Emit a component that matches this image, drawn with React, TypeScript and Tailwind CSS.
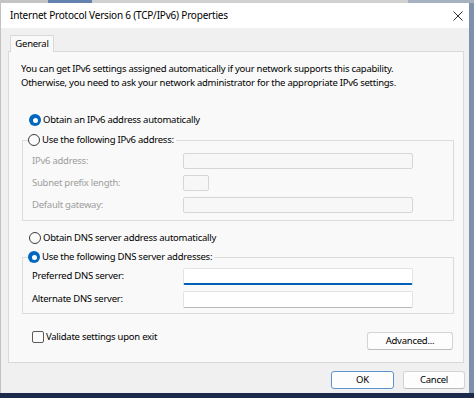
import React from "react";

const FONT = "font-['Noto_Sans','Liberation_Sans',sans-serif]";

function Radio({ label, checked = false }: { label: string; checked?: boolean }) {
  return (
    <div className="flex items-center gap-[2px] h-[16px]">
      {checked ? (
        <span className="w-[12px] h-[12px] rounded-full bg-[#0067c0] flex items-center justify-center">
          <span className="w-[5px] h-[5px] rounded-full bg-white" />
        </span>
      ) : (
        <span className="w-[12px] h-[12px] rounded-full border border-[#3c3c3c] bg-[#fbfbfb]" />
      )}
      <span className="text-black">{label}</span>
    </div>
  );
}

function DisabledRow({ label, small = false }: { label: string; small?: boolean }) {
  return (
    <div className="flex items-center h-[16px]">
      <span className="w-[160px] pl-[9px] text-[#9d9d9d]">{label}</span>
      <div
        className={
          (small ? "w-[26px]" : "w-[230px]") +
          " h-[16px] rounded-[2px] border border-[#d6d6d6] bg-[#f7f7f7]"
        }
      />
    </div>
  );
}

function DnsRow({ label, focused = false }: { label: string; focused?: boolean }) {
  return (
    <div className="flex items-center h-[17px]">
      <span className="w-[160px] pl-[9px] text-black">{label}</span>
      <div
        className={
          "w-[230px] h-[17px] rounded-[2px] bg-white border border-[#e3e3e3] " +
          (focused ? "border-b-2 border-b-[#005fb8]" : "border-b-[#b8b8b8]")
        }
      />
    </div>
  );
}

export default function App() {
  return (
    <div
      className={`w-[474px] h-[398px] overflow-hidden flex flex-col bg-[#1b2a4a] text-[9.5px] tracking-[-0.25px] ${FONT}`}
    >
      {/* strip of the window behind */}
      <div className="h-[3px] flex">
        <div className="w-[48px] bg-[#c4c4c4]" />
        <div className="w-[44px] bg-[#6583b0]" />
        <div className="flex-1 bg-[#d0d0d0]" />
        <div className="w-[66px] bg-[#a7b2c0]" />
      </div>

      <div className="h-[390px] flex">
        <div className="w-[469px] flex flex-col bg-[#f0f0f0] border-l border-[#c2c2c2]">
          {/* title bar */}
          <div className="h-[25px] bg-white flex items-center justify-between pl-[9px] pr-[5px]">
            <span className="text-[10px] tracking-[-0.2px] text-black">
              Internet Protocol Version 6 (TCP/IPv6) Properties
            </span>
            <svg width="10" height="10" viewBox="0 0 10 10" className="mr-[1px]">
              <path d="M0.5 0.5 L9.5 9.5 M9.5 0.5 L0.5 9.5" stroke="#2b2b2b" strokeWidth="1" />
            </svg>
          </div>

          <div className="px-[7px] pt-[7px]">
            <div className="ml-[2px] w-[44px] h-[17px] -mb-[1px] relative z-10 bg-[#f9f9f9] border border-b-0 border-[#d9d9d9] flex items-center justify-center text-black">
              General
            </div>

            <div className="w-[456px] h-[312px] border border-[#d9d9d9] bg-[#f9f9f9] flex flex-col">
              <p className="mt-[10px] ml-[12px] leading-[14px] text-black">
                You can get IPv6 settings assigned automatically if your network supports this capability.
                <br />
                Otherwise, you need to ask your network administrator for the appropriate IPv6 settings.
              </p>

              <div className="mt-[22px] ml-[20px]">
                <Radio label="Obtain an IPv6 address automatically" checked />
              </div>

              <fieldset className="mt-[4px] ml-[13px] w-[432px] border border-[#dcdcdc] pb-[7px]">
                <legend className="ml-[5px] pr-[2px]">
                  <Radio label="Use the following IPv6 address:" />
                </legend>
                <div className="mt-[5px] flex flex-col gap-[6px]">
                  <DisabledRow label="IPv6 address:" />
                  <DisabledRow label="Subnet prefix length:" small />
                  <DisabledRow label="Default gateway:" />
                </div>
              </fieldset>

              <div className="mt-[9px] ml-[20px]">
                <Radio label="Obtain DNS server address automatically" />
              </div>

              <fieldset className="mt-[3px] ml-[13px] w-[432px] border border-[#dcdcdc] pb-[5px]">
                <legend className="ml-[5px] pr-[2px]">
                  <Radio label="Use the following DNS server addresses:" checked />
                </legend>
                <div className="mt-[3px] flex flex-col gap-[6px]">
                  <DnsRow label="Preferred DNS server:" focused />
                  <DnsRow label="Alternate DNS server:" />
                </div>
              </fieldset>

              <div className="mt-[15px] flex justify-between items-start">
                <label className="ml-[23px] h-[16px] flex items-center gap-[2px] text-black">
                  <span className="w-[12px] h-[12px] rounded-[2px] border border-[#5a5a5a] bg-[#fbfbfb]" />
                  Validate settings upon exit
                </label>
                <button className="mt-[3px] mr-[10px] w-[86px] h-[18px] rounded-[3px] bg-[#fdfdfd] border border-[#d3d3d3] border-b-[#bcbcbc] text-black">
                  Advanced...
                </button>
              </div>
            </div>
          </div>

          <div className="mt-[8px] pr-[4px] flex justify-end gap-[9px]">
            <button className="w-[63px] h-[18px] rounded-[3px] bg-[#fdfdfd] border border-[#5b93cf] text-black">
              OK
            </button>
            <button className="w-[62px] h-[18px] rounded-[3px] bg-[#fdfdfd] border border-[#d3d3d3] border-b-[#bcbcbc] text-black">
              Cancel
            </button>
          </div>
        </div>
        <div className="flex-1 bg-[#7d91aa]" />
      </div>
      <div className="flex-1 bg-[#1b2a4a]" />
    </div>
  );
}
